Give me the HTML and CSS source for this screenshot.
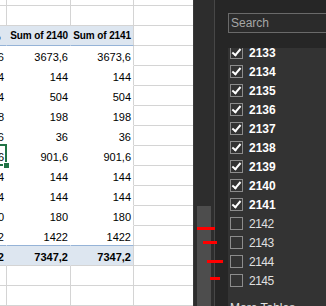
FILE: index.html
```html
<!DOCTYPE html>
<html lang="en">
<head>
    <meta charset="UTF-8">
    <meta name="viewport" content="width=device-width, initial-scale=1.0">
    <title>PivotTable Fields</title>
    <link rel="stylesheet" href="styles.css">
</head>
<body>
    <div class="screen">
        <!-- Worksheet with the pivot table -->
        <div class="sheet">
            <div class="c top"></div><div class="c top"></div><div class="c top"></div><div class="c top"></div>
            <div class="c"></div><div class="c"></div><div class="c last"></div><div class="c"></div>

            <div class="c head"><span class="arrow"></span></div>
            <div class="c head"><span>Sum of 2140</span></div>
            <div class="c head last"><span>Sum of 2141</span></div>
            <div class="c"></div>

            <div class="c val"><span>3673,6</span></div><div class="c val"><span>3673,6</span></div><div class="c val last"><span>3673,6</span></div><div class="c"></div>
            <div class="c val"><span>144</span></div><div class="c val"><span>144</span></div><div class="c val last"><span>144</span></div><div class="c"></div>
            <div class="c val"><span>504</span></div><div class="c val"><span>504</span></div><div class="c val last"><span>504</span></div><div class="c"></div>
            <div class="c val"><span>198</span></div><div class="c val"><span>198</span></div><div class="c val last"><span>198</span></div><div class="c"></div>
            <div class="c val"><span>36</span></div><div class="c val"><span>36</span></div><div class="c val last"><span>36</span></div><div class="c"></div>
            <div class="c val"><span>901,6</span></div><div class="c val"><span>901,6</span></div><div class="c val last"><span>901,6</span></div><div class="c"></div>
            <div class="c val"><span>144</span></div><div class="c val"><span>144</span></div><div class="c val last"><span>144</span></div><div class="c"></div>
            <div class="c val"><span>144</span></div><div class="c val"><span>144</span></div><div class="c val last"><span>144</span></div><div class="c"></div>
            <div class="c val"><span>180</span></div><div class="c val"><span>180</span></div><div class="c val last"><span>180</span></div><div class="c"></div>
            <div class="c val end"><span>1422</span></div><div class="c val end"><span>1422</span></div><div class="c val last end"><span>1422</span></div><div class="c"></div>

            <div class="c total"><span>7347,2</span></div>
            <div class="c total"><span>7347,2</span></div>
            <div class="c total last"><span>7347,2</span></div>
            <div class="c"></div>

            <div class="c"></div><div class="c"></div><div class="c"></div><div class="c"></div>
            <div class="c"></div><div class="c"></div><div class="c"></div><div class="c"></div>

            <div class="selection"><i class="handle"></i></div>
        </div>

        <!-- PivotTable field list -->
        <div class="panel">
            <div class="rail"><div class="thumb"></div></div>
            <div class="gutter"></div>
            <div class="fields">
                <div class="search">Search</div>
                <div class="list">
                    <div class="item on"><span class="box"></span>2133</div>
                    <div class="item on"><span class="box"></span>2134</div>
                    <div class="item on"><span class="box"></span>2135</div>
                    <div class="item on"><span class="box"></span>2136</div>
                    <div class="item on"><span class="box"></span>2137</div>
                    <div class="item on"><span class="box"></span>2138</div>
                    <div class="item on"><span class="box"></span>2139</div>
                    <div class="item on"><span class="box"></span>2140</div>
                    <div class="item on"><span class="box"></span>2141</div>
                    <div class="item"><span class="box"></span>2142</div>
                    <div class="item"><span class="box"></span>2143</div>
                    <div class="item"><span class="box"></span>2144</div>
                    <div class="item"><span class="box"></span>2145</div>
                </div>
                <div class="more">More Tables...</div>
            </div>

            <i class="mark m1"></i>
            <i class="mark m2"></i>
            <i class="mark m3"></i>
            <i class="mark m4"></i>
        </div>
    </div>
</body>
</html>
```

FILE: styles.css
```css
/* General */
html, body {
    margin: 0;
    padding: 0;
}

body {
    width: 326px;
    height: 306px;
    overflow: hidden;
    font-family: 'Liberation Sans', Arial, sans-serif;
}

.screen {
    display: flex;
    height: 306px;
    overflow: hidden;
}

/* Worksheet */
.sheet {
    position: relative;
    width: 193px;
    flex: none;
    display: grid;
    grid-template-columns: 7px 64px 63px 59px;
    grid-template-rows: 6px;
    grid-auto-rows: 20px;
    background: #fff;
    font-size: 11px;
    color: #000;
    overflow: hidden;
}

.c {
    box-sizing: border-box;
    border-right: 1px solid #d4d4d4;
    border-bottom: 1px solid #d4d4d4;
    display: flex;
    justify-content: flex-end;
    align-items: flex-end;
    overflow: hidden;
    white-space: nowrap;
    line-height: 14px;
    padding: 0 2px 1px 0;
}

.c span {
    flex: none;
}

.c:nth-child(4n) {
    border-right: none;
}

.head {
    background: #dde6f0;
    border-right-color: #dde6f0;
    border-bottom-color: #95b3d7;
    font-weight: bold;
    font-size: 10px;
    letter-spacing: -0.1px;
    padding-bottom: 2px;
}

.arrow {
    width: 2px;
    height: 4px;
    margin: 0 3px 3px 0;
    background: #5b9bd5;
    border-radius: 0 2px 2px 0;
}

.val {
    background: #fff;
    border-right-color: #fff;
    border-bottom-color: #fff;
}

.val.end {
    border-bottom-color: #95b3d7;
}

.total {
    background: #dde6f0;
    border-right-color: #dde6f0;
    font-weight: bold;
}

.c.last {
    border-right-color: #d4d4d4;
}

/* Active cell */
.selection {
    position: absolute;
    left: -10px;
    top: 144px;
    width: 17px;
    height: 22px;
    box-sizing: border-box;
    border: 2px solid #217346;
}

.handle {
    position: absolute;
    right: -5px;
    bottom: -5px;
    width: 5px;
    height: 5px;
    background: #217346;
    border: 1px solid #fff;
}

/* Field list panel */
.panel {
    position: relative;
    flex: 1;
    display: flex;
    background: #262626;
    border-left: 1px solid #3a3a3a;
}

.rail {
    width: 20px;
    flex: none;
    background: #2d2d2d;
    border-right: 1px solid #474747;
    display: flex;
    flex-direction: column;
    justify-content: flex-end;
    align-items: center;
}

.thumb {
    width: 14px;
    height: 100px;
    background: #4d4d4d;
}

.gutter {
    width: 13px;
    flex: none;
}

.fields {
    flex: 1;
    padding-top: 13px;
    min-width: 0;
}

.search {
    height: 20px;
    box-sizing: border-box;
    border: 1px solid #6a6a6a;
    border-right: none;
    background: #2b2b2b;
    color: #a6a6a6;
    font-size: 12px;
    line-height: 18px;
    padding-left: 2px;
}

.list {
    margin-top: 15px;
    background: #333;
    height: 243px;
    overflow: hidden;
    color: #e0e0e0;
    font-size: 12px;
    letter-spacing: -0.5px;
}

.item {
    display: flex;
    align-items: center;
    gap: 6px;
    height: 19px;
    padding-left: 2px;
}

.item:first-child {
    margin-top: -5px;
}

.item.on {
    color: #fff;
    font-weight: bold;
    letter-spacing: 0;
}

.box {
    width: 13px;
    height: 13px;
    box-sizing: border-box;
    border: 1px solid #8c8c8c;
    flex: none;
    position: relative;
}

.item.on .box::after {
    content: "";
    position: absolute;
    left: 3px;
    top: 0;
    width: 3px;
    height: 7px;
    border-right: 2px solid #fff;
    border-bottom: 2px solid #fff;
    transform: rotate(40deg);
}

.more {
    background: #333;
    color: #e0e0e0;
    font-size: 12px;
    line-height: 14px;
    padding: 10px 0 0 2px;
    height: 15px;
    box-sizing: border-box;
    overflow: hidden;
}

/* Red annotation dashes */
.mark {
    position: absolute;
    height: 3px;
    background: #ff0000;
}

.m1 { left: 3px;  top: 227px; width: 18px; }
.m2 { left: 9px;  top: 241px; width: 14px; }
.m3 { left: 13px; top: 260px; width: 16px; }
.m4 { left: 16px; top: 277px; width: 10px; }
```
